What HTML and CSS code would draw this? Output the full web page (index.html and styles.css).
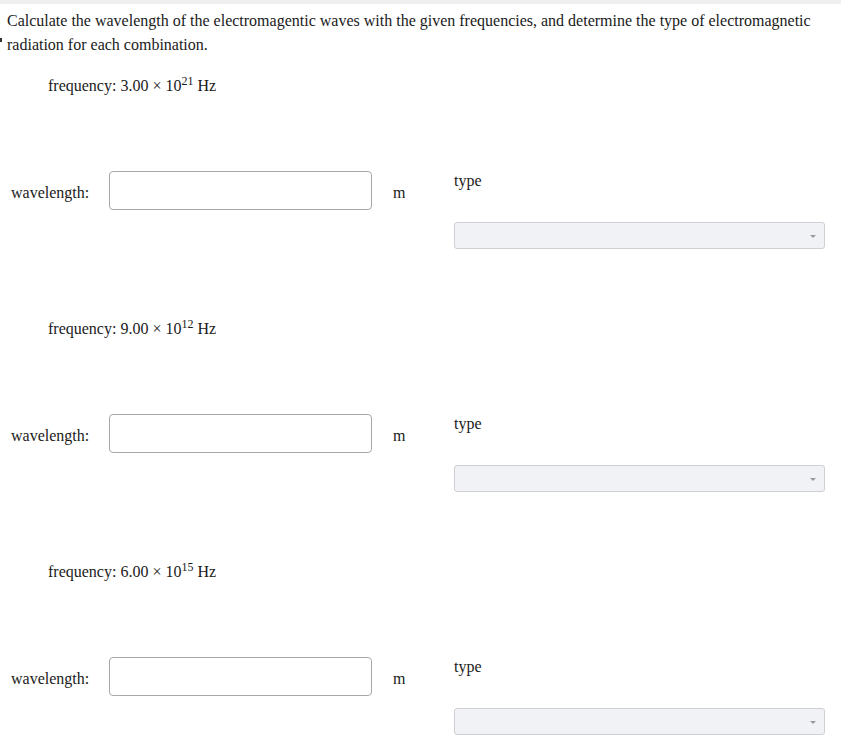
FILE: index.html
```html
<!DOCTYPE html>
<html>
<head>
<meta charset="utf-8">
<link rel="stylesheet" href="styles.css">
</head>
<body>
<div class="topbar"></div>
<div class="tick"></div>
<div class="content">
  <p class="intro">Calculate the wavelength of the electromagentic waves with the given frequencies, and determine the type of electromagnetic radiation for each combination.</p>

  <div class="block">
    <div class="freq">frequency: 3.00 × 10<sup>21</sup> Hz</div>
    <div class="row">
      <div class="left">
        <span class="label">wavelength:</span>
        <input class="field" type="text">
        <span class="unit">m</span>
      </div>
      <div class="typecol">
        <div class="typelabel">type</div>
        <div class="select"><span class="caret"></span></div>
      </div>
    </div>
  </div>

  <div class="block">
    <div class="freq">frequency: 9.00 × 10<sup>12</sup> Hz</div>
    <div class="row">
      <div class="left">
        <span class="label">wavelength:</span>
        <input class="field" type="text">
        <span class="unit">m</span>
      </div>
      <div class="typecol">
        <div class="typelabel">type</div>
        <div class="select"><span class="caret"></span></div>
      </div>
    </div>
  </div>

  <div class="block">
    <div class="freq">frequency: 6.00 × 10<sup>15</sup> Hz</div>
    <div class="row">
      <div class="left">
        <span class="label">wavelength:</span>
        <input class="field" type="text">
        <span class="unit">m</span>
      </div>
      <div class="typecol">
        <div class="typelabel">type</div>
        <div class="select"><span class="caret"></span></div>
      </div>
    </div>
  </div>
</div>
</body>
</html>
```

FILE: styles.css
```css
html, body {
  margin: 0;
  padding: 0;
  background: #fff;
}
body {
  font-family: "Liberation Serif", "Times New Roman", serif;
  font-size: 16px;
  color: #1a1a1a;
  line-height: 24px;
  position: relative;
}
.topbar {
  height: 4px;
  background: #eeeeee;
}
.tick {
  position: absolute;
  left: 0;
  top: 38px;
  width: 2px;
  height: 4px;
  background: #333;
}
.content {
  padding-left: 7px;
}
.intro {
  margin: 5px 0 0 0;
  width: 825px;
}
.block {
  margin-top: 17px;
  margin-bottom: 68px;
}
.block:last-child {
  margin-bottom: 0;
}
.freq {
  margin-left: 41px;
}
sup {
  font-size: 12px;
  line-height: 0;
  vertical-align: 6px;
}
.row {
  display: flex;
  margin-top: 71px;
}
.left {
  display: flex;
  align-items: flex-start;
  margin-left: 4px;
}
.label {
  width: 98px;
  margin-top: 12px;
}
.field {
  box-sizing: border-box;
  width: 263px;
  height: 39px;
  margin: 2px 0 0 0;
  border: 1px solid #a8a8a8;
  border-radius: 4px;
  background: #fff;
  padding: 0;
}
.unit {
  margin-left: 21px;
  margin-top: 12px;
  width: 61px;
}
.typecol {
  width: 371px;
}
.select {
  box-sizing: border-box;
  height: 27px;
  margin-top: 29px;
  border: 1px solid #cfd0d4;
  border-radius: 3px;
  background: #f1f2f6;
  position: relative;
}
.caret {
  position: absolute;
  right: 8px;
  top: 12px;
  width: 0;
  height: 0;
  border-left: 3px solid transparent;
  border-right: 3px solid transparent;
  border-top: 3px solid #999;
}
```
